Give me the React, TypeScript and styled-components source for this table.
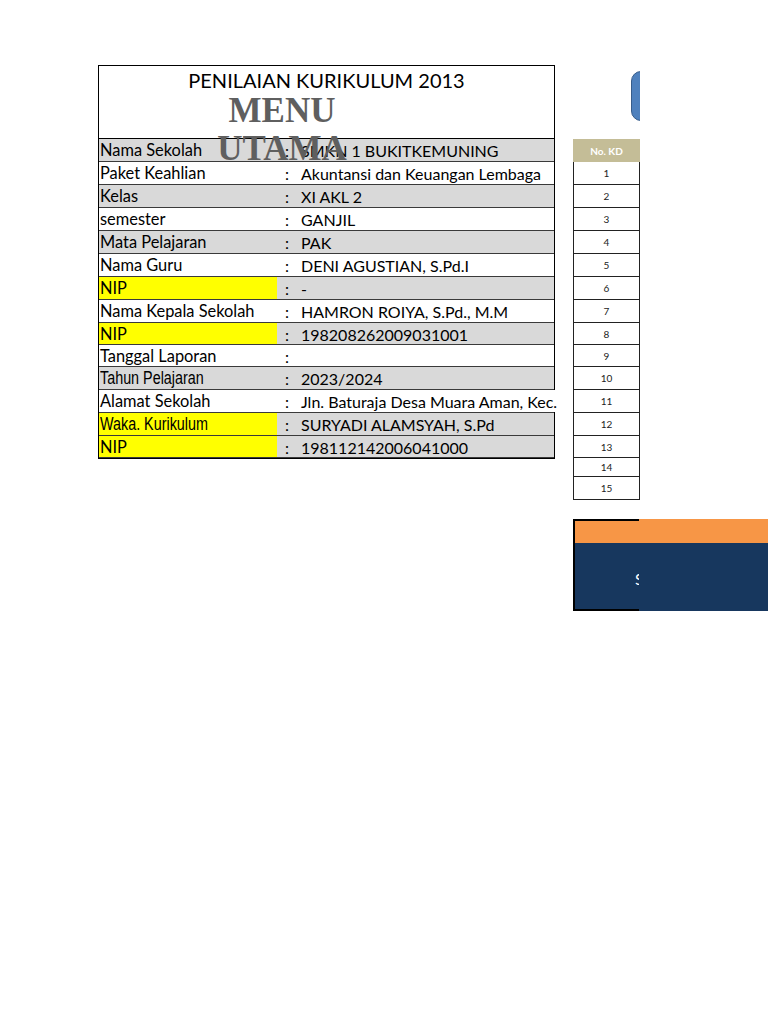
import React from "react";
import styled, { createGlobalStyle } from "styled-components";

const Global = createGlobalStyle`
  html, body { margin: 0; padding: 0; background: #ffffff; }
  body { font-family: "Lato", "Liberation Sans", sans-serif; color: #000; }
`;

const Page = styled.div`
  width: 768px;
  height: 1024px;
  overflow: hidden;
  box-sizing: border-box;
  padding: 65px 0 0 98px;
  display: flex;
  align-items: flex-start;
  gap: 18px;
`;

const MainTable = styled.div`
  position: relative;
  width: 457px;
  box-sizing: border-box;
  border: 1px solid #000;
  display: flex;
  flex-direction: column;
`;

const TitleCell = styled.div`
  height: 73px;
  border-bottom: 1px solid #000;
  text-align: center;
  font-size: 20px;
  line-height: 28px;
  box-sizing: border-box;
`;

const Overlay = styled.div`
  position: absolute;
  left: 83px;
  top: 26px;
  width: 200px;
  text-align: center;
  font-family: "Liberation Serif", serif;
  font-weight: bold;
  font-size: 35px;
  line-height: 38px;
  color: #5f5f5f;
  pointer-events: none;
`;

type Tone = "white" | "gray" | "yellow";
const bg = (t: Tone) => (t === "gray" ? "#d9d9d9" : t === "yellow" ? "#ffff00" : "#ffffff");

const Row = styled.div<{ $h: number }>`
  display: flex;
  height: ${(p) => p.$h}px;
  box-sizing: border-box;
  border-bottom: 1px solid #3a3a3a;
  &:last-child { border-bottom: none; }
`;

const Label = styled.div<{ $tone: Tone }>`
  width: 178px;
  flex: none;
  background: ${(p) => bg(p.$tone)};
  padding-left: 1px;
  box-sizing: border-box;
  white-space: nowrap;
  font-size: 16.4px;
  line-height: 22px;
`;

const NarrowText = styled.span`
  display: inline-block;
  font-family: "Liberation Sans", Arial, sans-serif;
  font-size: 17.5px;
  line-height: 19px;
  transform: scaleX(0.82);
  transform-origin: left center;
`;

const Colon = styled.div<{ $tone: Tone }>`
  width: 24px;
  flex: none;
  background: ${(p) => bg(p.$tone)};
  padding-left: 8px;
  box-sizing: border-box;
  font-size: 16px;
  line-height: 23px;
`;

const Value = styled.div<{ $tone: Tone }>`
  flex: 1;
  background: ${(p) => bg(p.$tone)};
  white-space: nowrap;
  overflow: visible;
  font-size: 16px;
  line-height: 23px;
`;

const RightCol = styled.div`
  display: flex;
  flex-direction: column;
  align-items: flex-start;
`;

const Clip = styled.div`
  width: 67px;
  overflow: hidden;
  display: flex;
  flex-direction: column;
`;

const BlueButton = styled.div`
  margin-left: 58px;
  margin-top: 6px;
  width: 120px;
  height: 50px;
  flex: none;
  border-radius: 10px;
  background: #4f81bd;
  border: 1px solid #385d8a;
  box-sizing: border-box;
`;

const KdTable = styled.div`
  margin-top: 18px;
  width: 67px;
  display: flex;
  flex-direction: column;
`;

const KdHead = styled.div`
  height: 23px;
  background: #c4bd97;
  color: #ffffff;
  font-weight: bold;
  font-size: 10px;
  display: flex;
  align-items: center;
  justify-content: center;
  box-sizing: border-box;
`;

const KdCell = styled.div<{ $h: number }>`
  height: ${(p) => p.$h}px;
  box-sizing: border-box;
  border: 1px solid #222;
  border-top: none;
  display: flex;
  align-items: center;
  justify-content: center;
  font-size: 10px;
  color: #222;
`;

const Banner = styled.div`
  position: relative;
  margin-top: 19px;
  width: 195px;
  display: flex;
  flex-direction: column;
  &::before {
    content: "";
    position: absolute;
    left: 0;
    top: 0;
    bottom: 0;
    width: 66px;
    border: 2px solid #000;
    border-right: none;
    box-sizing: border-box;
  }
`;

const Orange = styled.div`
  height: 24px;
  background: #f79646;
`;

const Navy = styled.div`
  height: 68px;
  background: #17375e;
  display: flex;
  align-items: center;
`;

const NavyClip = styled.div`
  width: 66px;
  overflow: hidden;
  white-space: nowrap;
  color: #fff;
  font-size: 16px;
  padding-left: 62px;
  box-sizing: border-box;
  margin-top: 2px;
`;

type R = { label: string; value: string; tone: Tone; labelTone?: Tone; arial?: boolean; h: number };

const rows: R[] = [
  { label: "Nama Sekolah", value: "SMKN 1 BUKITKEMUNING", tone: "gray", h: 23 },
  { label: "Paket Keahlian", value: "Akuntansi dan Keuangan Lembaga", tone: "white", h: 23 },
  { label: "Kelas", value: "XI AKL 2", tone: "gray", h: 23 },
  { label: "semester", value: "GANJIL", tone: "white", h: 23 },
  { label: "Mata Pelajaran", value: "PAK", tone: "gray", h: 23 },
  { label: "Nama Guru", value: "DENI AGUSTIAN, S.Pd.I", tone: "white", h: 23 },
  { label: "NIP", value: "-", tone: "gray", labelTone: "yellow", h: 23 },
  { label: "Nama Kepala Sekolah", value: "HAMRON ROIYA, S.Pd., M.M", tone: "white", h: 23 },
  { label: "NIP", value: "198208262009031001", tone: "gray", labelTone: "yellow", h: 22 },
  { label: "Tanggal Laporan", value: "", tone: "white", h: 22 },
  { label: "Tahun Pelajaran", value: "2023/2024", tone: "gray", arial: true, h: 23 },
  { label: "Alamat Sekolah", value: "Jln. Baturaja Desa Muara Aman, Kec.", tone: "white", h: 23 },
  { label: "Waka. Kurikulum", value: "SURYADI ALAMSYAH, S.Pd", tone: "gray", labelTone: "yellow", arial: true, h: 23 },
  { label: "NIP", value: "198112142006041000", tone: "gray", labelTone: "yellow", h: 22 },
];

const kdHeights = [23, 23, 23, 23, 23, 23, 23, 22, 22, 23, 23, 23, 22, 19, 23];

export default function App() {
  return (
    <>
      <Global />
      <Page>
        <MainTable>
          <TitleCell>PENILAIAN KURIKULUM 2013</TitleCell>
          {rows.map((r, i) => (
            <Row key={i} $h={r.h}>
              <Label $tone={r.labelTone ?? r.tone}>
                {r.arial ? <NarrowText>{r.label}</NarrowText> : r.label}
              </Label>
              <Colon $tone={r.tone}>:</Colon>
              <Value $tone={r.tone}>{r.value}</Value>
            </Row>
          ))}
          <Overlay>
            MENU
            <br />
            UTAMA
          </Overlay>
        </MainTable>
        <RightCol>
          <Clip>
            <BlueButton />
            <KdTable>
              <KdHead>No. KD</KdHead>
              {kdHeights.map((h, i) => (
                <KdCell key={i} $h={h}>{i + 1}</KdCell>
              ))}
            </KdTable>
          </Clip>
          <Banner>
            <Orange />
            <Navy>
              <NavyClip>SIMPAN</NavyClip>
            </Navy>
          </Banner>
        </RightCol>
      </Page>
    </>
  );
}
